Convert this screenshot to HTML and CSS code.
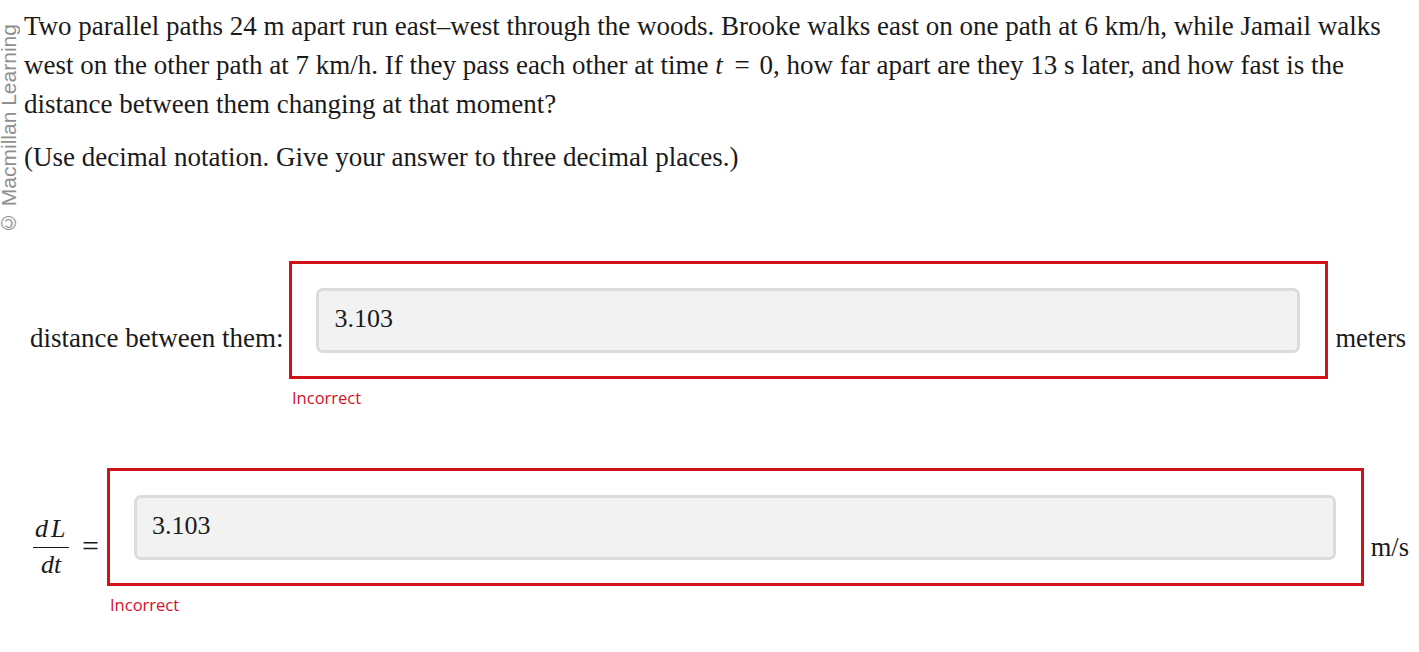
FILE: index.html
```html
<!DOCTYPE html>
<html>
<head>
<meta charset="utf-8">
<link rel="stylesheet" href="styles.css">
</head>
<body>
<div class="watermark">© Macmillan Learning</div>
<main class="question">
  <p class="text">Two parallel paths 24 m apart run east–west through the woods. Brooke walks east on one path at 6 km/h, while Jamail walks west on the other path at 7 km/h. If they pass each other at time <i class="var">t</i> <span class="op">=</span> 0, how far apart are they 13 s later, and how fast is the distance between them changing at that moment?</p>
  <p class="text">(Use decimal notation. Give your answer to three decimal places.)</p>

  <div class="answer answer-first">
    <div class="row">
      <span class="label">distance between them:</span>
      <div class="box">
        <div class="input">3.103</div>
      </div>
      <span class="unit">meters</span>
    </div>
    <div class="feedback feedback-first">Incorrect</div>
  </div>

  <div class="answer answer-second">
    <div class="row">
      <span class="frac">
        <span class="num"><i>d</i><i>L</i></span>
        <span class="den"><i>dt</i></span>
      </span>
      <span class="eq">=</span>
      <div class="box box-wide">
        <div class="input">3.103</div>
      </div>
      <span class="unit unit-low">m/s</span>
    </div>
    <div class="feedback feedback-second">Incorrect</div>
  </div>
</main>
</body>
</html>
```

FILE: styles.css
```css
html, body {
  margin: 0;
  padding: 0;
  background: #ffffff;
}
body {
  font-family: "Liberation Serif", "Times New Roman", serif;
  color: #1a1a1a;
  position: relative;
}
.watermark {
  position: absolute;
  left: -1px;
  top: -16px;
  width: 20px;
  height: 251px;
  writing-mode: vertical-rl;
  transform: rotate(180deg);
  font-family: "Liberation Sans", Arial, sans-serif;
  font-size: 21px;
  line-height: 20px;
  color: #8f8f8f;
  white-space: nowrap;
  text-align: left;
}
.question {
  padding: 7px 10px 0 24px;
}
.text {
  margin: 0 0 14px 0;
  font-size: 27px;
  line-height: 39px;
}
.var {
  padding-right: 2px;
}
.op {
  padding: 0 3px;
}
.answer-first {
  margin-top: 84px;
}
.answer-second {
  margin-top: 59px;
}
.row {
  display: flex;
  align-items: center;
}
.label {
  font-size: 27px;
  margin-left: 6px;
  margin-right: 6px;
  padding-top: 36px;
}
.box {
  border: 3px solid #d0121b;
  padding: 24px 25px 23px 24px;
  width: 984px;
}
.box-wide {
  width: 1202px;
}
.input {
  box-sizing: border-box;
  height: 65px;
  border: 3px solid #dcdcdc;
  border-radius: 7px;
  background: #f2f2f2;
  padding: 13px 15px 0 15px;
  font-size: 26px;
  line-height: 30px;
}
.unit {
  font-size: 26.5px;
  margin-left: 7px;
  padding-top: 36px;
}
.unit-low {
  padding-top: 40px;
}
.frac {
  display: inline-flex;
  flex-direction: column;
  align-items: center;
  margin-left: 9px;
  width: 36px;
  font-size: 26px;
  line-height: 28px;
  padding-top: 40px;
}
.num {
  border-bottom: 1.5px solid #1a1a1a;
  padding: 0 2px 4px;
  letter-spacing: 3px;
  width: 32px;
  text-align: center;
}
.den {
  padding-top: 3px;
}
.eq {
  font-size: 30px;
  margin-left: 13px;
  margin-right: 8px;
  padding-top: 38px;
}
.feedback {
  font-family: "Open Sans", "Noto Sans", sans-serif;
  font-size: 16.5px;
  color: #d0122a;
  margin-top: 8px;
  line-height: 22px;
}
.feedback-first {
  margin-left: 268px;
}
.feedback-second {
  margin-left: 86px;
}
```
